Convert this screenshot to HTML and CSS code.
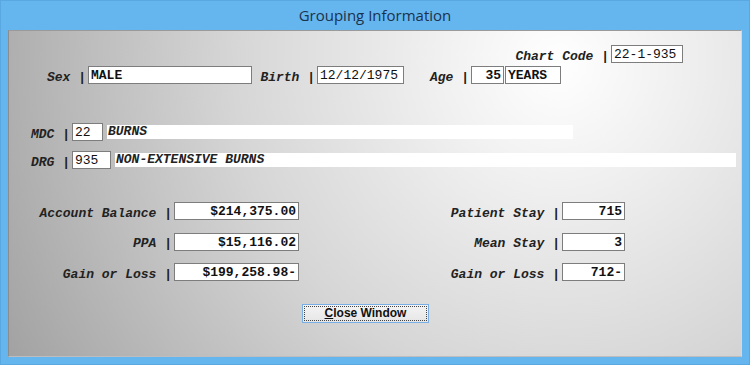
FILE: index.html
```html
<!DOCTYPE html>
<html lang="en">
<head>
  <meta charset="UTF-8">
  <meta name="viewport" content="width=device-width, initial-scale=1.0">
  <title>Grouping Information</title>
  <link rel="stylesheet" href="styles.css">
</head>
<body>
  <div class="window">
    <div class="titlebar">Grouping Information</div>
    <div class="content">
      <!-- chart code -->
      <div class="row row-chart">
        <span class="lbl">Chart Code |</span>
        <span class="fld w-chart">22-1-935</span>
      </div>

      <!-- patient -->
      <div class="row row-personal">
        <span class="lbl cell-sex">Sex |</span>
        <span class="fld bold w-sex">MALE</span>
        <span class="lbl cell-birth">Birth |</span>
        <span class="fld w-birth">12/12/1975</span>
        <span class="lbl cell-age">Age |</span>
        <span class="fld bold num w-age">35</span>
        <span class="fld bold w-years">YEARS</span>
      </div>

      <!-- mdc / drg -->
      <div class="row row-mdc">
        <span class="lbl cell-code">MDC |</span>
        <span class="fld w-mdc">22</span>
        <span class="desc w-mdc-desc">BURNS</span>
      </div>
      <div class="row row-drg">
        <span class="lbl cell-code">DRG |</span>
        <span class="fld w-drg">935</span>
        <span class="desc w-drg-desc">NON-EXTENSIVE BURNS</span>
      </div>

      <!-- money + stay -->
      <div class="totals">
        <span class="lbl right">Account Balance |</span>
        <span class="fld bold num">$214,375.00</span>
        <span class="lbl right">Patient Stay |</span>
        <span class="fld bold num">715</span>

        <span class="lbl right">PPA |</span>
        <span class="fld bold num">$15,116.02</span>
        <span class="lbl right">Mean Stay |</span>
        <span class="fld bold num">3</span>

        <span class="lbl right">Gain or Loss |</span>
        <span class="fld bold num">$199,258.98-</span>
        <span class="lbl right">Gain or Loss |</span>
        <span class="fld bold num">712-</span>
      </div>

      <div class="actions">
        <button class="close-btn"><span><u>C</u>lose Window</span></button>
      </div>
    </div>
  </div>
</body>
</html>
```

FILE: styles.css
```css
body {
  margin: 0;
  background-color: #65b5ef;
}

.window {
  width: 750px;
  height: 365px;
  background-color: #65b5ef;
  box-sizing: border-box;
  border: 1px solid #5aa8e2;
}

.titlebar {
  height: 29px;
  line-height: 29px;
  text-align: center;
  font-family: "Open Sans", "Noto Sans", sans-serif;
  font-size: 15px;
  color: #1b324b;
}

.content {
  margin: 0 7px;
  height: 327px;
  box-sizing: border-box;
  padding-top: 14px;
  border-left: 1px solid #8c8c8c;
  border-top: 1px solid #9a9a9a;
  border-right: 1px solid #d8d8d8;
  border-bottom: 1px solid #bdbdbd;
  background: radial-gradient(circle farthest-corner at 75% 10%, #ffffff 0%, #eeeeee 22%, #d6d6d6 52%, #b8b8b8 80%, #a2a2a2 100%);
  font-family: "Liberation Mono", "Courier New", monospace;
  font-size: 13px;
  color: #111;
}

.row {
  display: flex;
  align-items: center;
  height: 18px;
}

.lbl {
  font-weight: bold;
  font-style: italic;
  color: #222;
  white-space: pre;
  padding-right: 2px;
  position: relative;
  top: 2px;
}

.cell-sex, .cell-birth, .cell-age, .cell-code, .right {
  text-align: right;
  box-sizing: border-box;
}

.fld {
  display: inline-block;
  box-sizing: border-box;
  height: 18px;
  line-height: 15px;
  padding: 1px 2px 0;
  background-color: #ffffff;
  border: 1px solid #7d7d7d;
  white-space: pre;
}

.bold {
  font-weight: bold;
}

.num {
  text-align: right;
}

.desc {
  display: inline-block;
  box-sizing: border-box;
  height: 14px;
  line-height: 14px;
  padding-left: 1px;
  margin-left: 4px;
  background-color: #ffffff;
  font-weight: bold;
  font-style: italic;
  color: #222;
}

/* chart code row */
.row-chart {
  justify-content: flex-end;
  padding-right: 58px;
}

.w-chart { width: 72px; }

/* sex / birth / age row */
.row-personal {
  margin-top: 3px;
}

.cell-sex { width: 79px; }
.w-sex { width: 164px; }
.cell-birth { width: 65px; }
.w-birth { width: 87px; }
.cell-age { width: 67px; }
.w-age { width: 33px; }
.w-years { width: 56px; margin-left: 1px; }

/* mdc / drg */
.row-mdc {
  margin-top: 39px;
}

.row-drg {
  margin-top: 10px;
}

.cell-code { width: 63px; }
.w-mdc { width: 31px; }
.w-drg { width: 39px; }
.w-mdc-desc { width: 466px; }
.w-drg-desc { width: 621px; }

/* totals grid */
.totals {
  margin-top: 33px;
  display: grid;
  grid-template-columns: 165px 125px 263px 63px;
  grid-auto-rows: 18px;
  row-gap: 12.5px;
  align-items: center;
}

.actions {
  margin-top: 23px;
  padding-left: 293px;
}

.close-btn {
  width: 127px;
  height: 19px;
  padding: 1px;
  border: 1px solid #7aafe6;
  background: linear-gradient(#f4f4f4, #e6e6e6);
  font-family: "Liberation Sans", Arial, sans-serif;
  font-size: 12px;
  font-weight: bold;
  color: #111;
  cursor: pointer;
}

.close-btn span {
  display: block;
  height: 100%;
  box-sizing: border-box;
  line-height: 13px;
  border: 1px dotted #444;
}
```
